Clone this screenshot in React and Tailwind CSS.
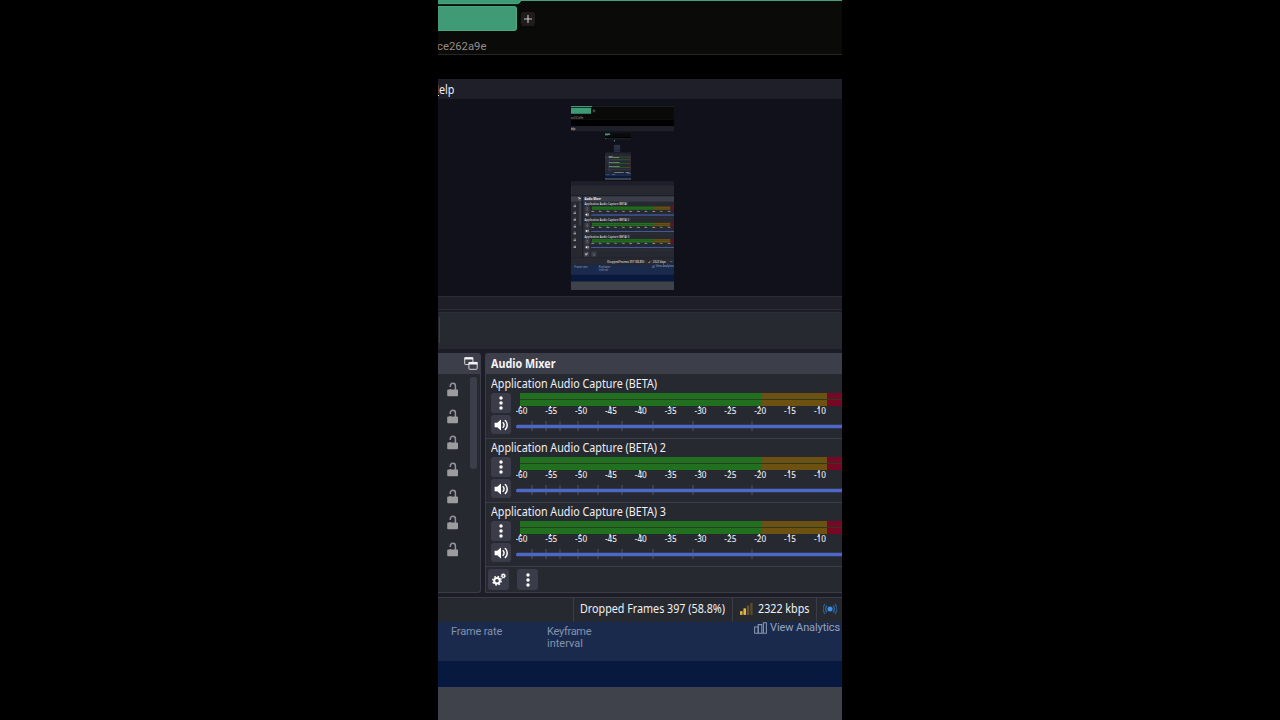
import React from "react";

const sources = [
  "Application Audio Capture (BETA)",
  "Application Audio Capture (BETA) 2",
  "Application Audio Capture (BETA) 3",
];

const dbMarks = [-60, -55, -50, -45, -40, -35, -30, -25, -20, -15, -10];

const sliderMarks = [16, 30, 44, 62, 82, 106, 137, 177, 236];

const UnlockIcon = () => (
  <svg className="w-3 h-[15px]" viewBox="0 0 12 15">
    <path d="M3.3 8V3.9a2.5 2.5 0 0 1 5.1 0V8" fill="none" stroke="#94949a" strokeWidth="1.5" />
    <path d="M1.8 4.9h2.6v2.2H1.8z" fill="#272931" />
    <rect x="0.2" y="7.4" width="10.8" height="6.8" rx="1" fill="#9c9c9e" />
  </svg>
);

const PopoutIcon = () => (
  <svg className="w-[14px] h-[13px]" viewBox="0 0 14 13">
    <rect x="0.7" y="0.7" width="8.2" height="6.8" rx="0.6" fill="#3c3e4a" stroke="#d6d6da" />
    <path d="M0.5 0.2h8.6v2.3H0.5z" fill="#f2f2f4" />
    <rect x="4.9" y="5.4" width="8.3" height="6.9" rx="0.6" fill="#3c3e4a" stroke="#d6d6da" />
    <path d="M4.6 5h8.9v2.4H4.6z" fill="#f2f2f4" />
  </svg>
);

const DotsIcon = () => (
  <svg className="w-1 h-[14px]" viewBox="0 0 4 14" fill="#fff">
    <circle cx="2" cy="2" r="1.75" />
    <circle cx="2" cy="7" r="1.75" />
    <circle cx="2" cy="12" r="1.75" />
  </svg>
);

const SpeakerIcon = () => (
  <svg className="w-[15px] h-3" viewBox="0 0 15 12" fill="none" stroke="#fff" strokeWidth="1.5" strokeLinecap="round">
    <path d="M0.6 3.8h2.6L7 0.5v11L3.2 8.2H0.6z" fill="#fff" stroke="none" />
    <path d="M9.1 3.7a3.2 3.2 0 0 1 0 4.6" />
    <path d="M11.3 1.5a6.2 6.2 0 0 1 0 9" />
  </svg>
);

const GearsIcon = () => (
  <svg className="w-[14px] h-[13px]" viewBox="0 0 14 13" fill="none" stroke="#fff">
    <circle cx="5" cy="7.7" r="2.8" strokeWidth="2" />
    <circle cx="5" cy="7.7" r="4.2" strokeWidth="1.5" strokeDasharray="1.65 1.65" />
    <circle cx="11.3" cy="2.9" r="1.4" strokeWidth="1.3" />
    <circle cx="11.3" cy="2.9" r="2.2" strokeWidth="1" strokeDasharray="0.86 0.86" />
  </svg>
);

const SignalIcon = () => (
  <svg className="w-[13px] h-3" viewBox="0 0 13 12">
    <rect x="0" y="8" width="2.6" height="4" rx="0.8" fill="#e0ac38" />
    <rect x="3.4" y="5.2" width="2.6" height="6.8" rx="0.8" fill="#e5b445" />
    <rect x="6.8" y="2.4" width="2.4" height="9.6" rx="0.5" fill="#66542f" />
    <rect x="10.2" y="0" width="2.4" height="12" rx="0.5" fill="#594b2f" />
  </svg>
);

const BroadcastIcon = () => (
  <svg className="w-[14px] h-3" viewBox="0 0 14 12" fill="none" stroke="#2c6bab" strokeWidth="1.3">
    <circle cx="7" cy="6" r="2.5" fill="#3b92ea" stroke="none" />
    <path d="M4 2.8a4.4 4.4 0 0 0 0 6.4M10 2.8a4.4 4.4 0 0 1 0 6.4" />
    <path d="M2.2 1a7 7 0 0 0 0 10M11.8 1a7 7 0 0 1 0 10" strokeOpacity="0.75" />
  </svg>
);

const AnalyticsIcon = () => (
  <svg className="w-[13px] h-3" viewBox="0 0 13 12" fill="none" stroke="#8492ad" strokeWidth="1.1">
    <path d="M0.6 5h3.6v6.3H0.6z" />
    <path d="M4.2 11.3V2.6h3.6v8.7" />
    <path d="M9.4 0.7h3v10.6h-3zM4.2 11.3h5.2" />
  </svg>
);

// Label text, set slightly narrower than the font's own widths.
const Label = ({ children, className = "" }) => (
  <span className={`block w-max origin-left scale-x-[0.895] whitespace-nowrap ${className}`}>
    {children}
  </span>
);

const IconButton = ({ children, className = "" }) => (
  <div className={`flex items-center justify-center rounded-[3px] bg-[#3a3c49] ${className}`}>
    {children}
  </div>
);

const MeterBar = ({ className = "" }) => (
  <div className={`flex ${className}`}>
    <div className="w-[242px] bg-[#21701f]" />
    <div className="w-[65px] bg-[#6c5112]" />
    <div className="flex-1 bg-[#760825]" />
  </div>
);

const MixerRow = ({ name }) => (
  <div className="h-16 shrink-0 border-b border-[#3a3c48] pl-[5px]">
    <div className="h-[17px] text-[12px] leading-[18px] text-[#f0f0f4]">
      <Label>{name}</Label>
    </div>
    <div className="flex gap-[5px]">
      <div className="flex w-5 flex-col gap-[2px] pt-px">
        <IconButton className="h-5"><DotsIcon /></IconButton>
        <IconButton className="h-[19px]"><SpeakerIcon /></IconButton>
      </div>
      <div className="flex-1 overflow-hidden">
        <div className="ml-1 mt-px h-[12.5px] flex flex-col bg-[#2a3c1f]">
          <MeterBar className="h-[6px]" />
          <MeterBar className="mt-[0.5px] h-[6px]" />
        </div>
        <svg className="block w-[326px] h-[14.5px]" viewBox="0 0 326 14.5">
          {dbMarks.map((db, i) => (
            <g key={db}>
              <rect x={3.8 + i * 29.85} y="-0.5" width="1.3" height="3" fill="#e6e6ea" />
              <text
                x={5.4 + i * 29.85}
                y="8"
                textAnchor="middle"
                fontSize="8.2"
                fontWeight="500"
                fill="#e6e6ea"
              >
                {db}
              </text>
            </g>
          ))}
        </svg>
        <svg className="block w-[326px] h-[12px]" viewBox="0 0 326 12">
          {sliderMarks.map((x) => (
            <rect key={x} x={x - 0.5} y="1" width="1" height="10" fill="#50525e" />
          ))}
          <rect x="0" y="4.8" width="330" height="3.4" rx="1.5" fill="#4c67c4" />
        </svg>
      </div>
    </div>
  </div>
);

const BrowserTop = () => (
  <div className="h-[55px] shrink-0 border-b border-[#262626] bg-[#0a0b09]">
    <svg className="block w-[404px] h-[6px]" viewBox="0 0 404 6">
      <path d="M0 0h84l-3 3.8H0z" fill="#3c9a75" />
      <path d="M0 3.7h79.5l3.5-3.2H404" fill="none" stroke="#4fae88" strokeWidth="0.9" />
    </svg>
    <div className="flex items-center gap-1">
      <div className="h-[25px] w-[79px] rounded-r-[3px] border border-l-0 border-[#48a882] bg-[#3f9a75]" />
      <div className="flex h-[14px] w-[14px] items-center justify-center rounded-[3px] bg-[#211c1c]">
        <svg className="w-2 h-2" viewBox="0 0 8 8" stroke="#c9c5c3" strokeWidth="1.1">
          <path d="M4 0v8M0 4h8" />
        </svg>
      </div>
    </div>
    <p className="-ml-px mt-[8px] font-['Roboto',sans-serif] text-[11.3px] leading-4 text-[#958b89]">ce262a9e</p>
  </div>
);

const SceneDock = () => (
  <div className="flex w-[43px] shrink-0 flex-col rounded-r-[3px] border-r border-b border-[#3a3c48] bg-[#272931] overflow-hidden">
    <div className="flex h-[21px] shrink-0 items-center justify-end bg-[#3c3e4a] pr-[2px]">
      <PopoutIcon />
    </div>
    <div className="flex flex-1 justify-between pr-[3px]">
      <div className="flex flex-col gap-[11.7px] pl-[9px] pt-[8px]">
        {[0, 1, 2, 3, 4, 5, 6].map((i) => <UnlockIcon key={i} />)}
      </div>
      <div className="mt-[3px] h-[92px] w-[7px] rounded-[3px] bg-[#3c3e4a]" />
    </div>
  </div>
);

const MixerDock = () => (
  <div className="flex flex-1 flex-col overflow-hidden rounded-tl-[3px] border-l border-b border-[#3a3c48] bg-[#272931]">
    <h2 className="h-[21px] shrink-0 bg-[#3c3e4a] pl-[5px] text-[12px] font-bold leading-[22px] text-[#f4f4f6]">
      <Label>Audio Mixer</Label>
    </h2>
    <div className="pt-px">
      {sources.map((name) => <MixerRow key={name} name={name} />)}
    </div>
    <div className="flex gap-2 pl-[2px] pt-[2px]">
      <IconButton className="h-[21px] w-[21px]"><GearsIcon /></IconButton>
      <IconButton className="h-[21px] w-[21px]"><DotsIcon /></IconButton>
    </div>
  </div>
);

const StatusBar = () => (
  <div className="flex h-[25px] shrink-0 items-stretch overflow-hidden border-t border-[#3a3c48] bg-[#272931] text-[12px] leading-[22px] text-[#f0f0f4]">
    <div className="w-[136px] shrink-0 border-r border-[#3a3c48]" />
    <div className="w-[159px] shrink-0 border-r border-[#3a3c48] pl-[6px]">
      <Label>Dropped Frames 397 (58.8%)</Label>
    </div>
    <div className="flex w-[84px] shrink-0 gap-[5px] border-r border-[#3a3c48] pl-[7px]">
      <div className="shrink-0 pt-[5px]"><SignalIcon /></div>
      <Label>2322 kbps</Label>
    </div>
    <div className="pl-[6px] pt-[5px]"><BroadcastIcon /></div>
  </div>
);

const StreamFooter = () => (
  <div className="font-['Roboto',sans-serif] text-[11px] leading-3 text-[#8492ad]">
    <div className="flex h-[39px] bg-[#1a2a4c]">
      <p className="w-[109px] pl-[13px] pt-[4px] tracking-[-0.15px]">Frame rate</p>
      <p className="w-[60px] pt-[4px] tracking-[-0.3px]">Keyframe <span className="tracking-normal">interval</span></p>
      <div className="ml-auto flex items-start gap-[3px] pr-[2px] whitespace-nowrap">
        <AnalyticsIcon />
        <span className="tracking-[-0.1px] text-[#97a3bb]">View Analytics</span>
      </div>
    </div>
    <div className="h-[26px] bg-[#08193f]" />
    <div className="h-[33px] bg-[#3f424b]" />
  </div>
);

// Stand-in for the screen once it is too small to make out.
const TinyScreen = () => (
  <div className="flex h-[720px] w-[404px] flex-col">
    <div className="h-[80px] w-[80px] bg-[#3f9a75]" />
    <div className="h-[210px]" />
    <div className="h-[300px] bg-[#2d3243]" />
    <div className="h-[97px] bg-[#1a2a4c]" />
    <div className="h-[33px] bg-[#3f424b]" />
  </div>
);

// The preview captures the whole screen, so it contains itself at a smaller scale.
const Screen = ({ depth = 0 }) => (
  <div className="flex h-[720px] w-[404px] flex-col overflow-hidden bg-[#1c1d27] font-['Noto_Sans',sans-serif]">
    <BrowserTop />
    <div className="h-[24px] shrink-0 bg-black" />
    <div className="h-5 shrink-0 overflow-hidden bg-[#1e1f29] text-[12px] leading-[21px] text-[#f0f0f4]">
      <Label className="-ml-[7px]"><span className="underline">H</span>elp</Label>
    </div>
    <div className="h-[197px] shrink-0 bg-[#10111b] pl-[133px] pt-[7px]">
      <div className="h-[184px] w-[103px] overflow-hidden">
        <div className="w-[404px] origin-top-left scale-[0.2555]">
          {depth < 2 ? <Screen depth={depth + 1} /> : <TinyScreen />}
        </div>
      </div>
    </div>
    <div className="h-[14px] shrink-0 border-y border-[#2b2c38] bg-[#1e1f29]" />
    <div className="mt-[2px] flex h-[37px] shrink-0 items-center border-t border-[#2b2c38] bg-[#272931]">
      <div className="-mt-[3px] h-[26px] w-[2px] border-r border-[#3c3e4a]" />
    </div>
    <div className="mt-[4px] flex h-[240px] shrink-0 gap-1">
      <SceneDock />
      <MixerDock />
    </div>
    <div className="h-1 shrink-0" />
    <StatusBar />
    <StreamFooter />
  </div>
);

const App = () => (
  <div className="flex h-[720px] w-[1280px] justify-center overflow-hidden bg-black">
    <Screen />
  </div>
);

export default App;
